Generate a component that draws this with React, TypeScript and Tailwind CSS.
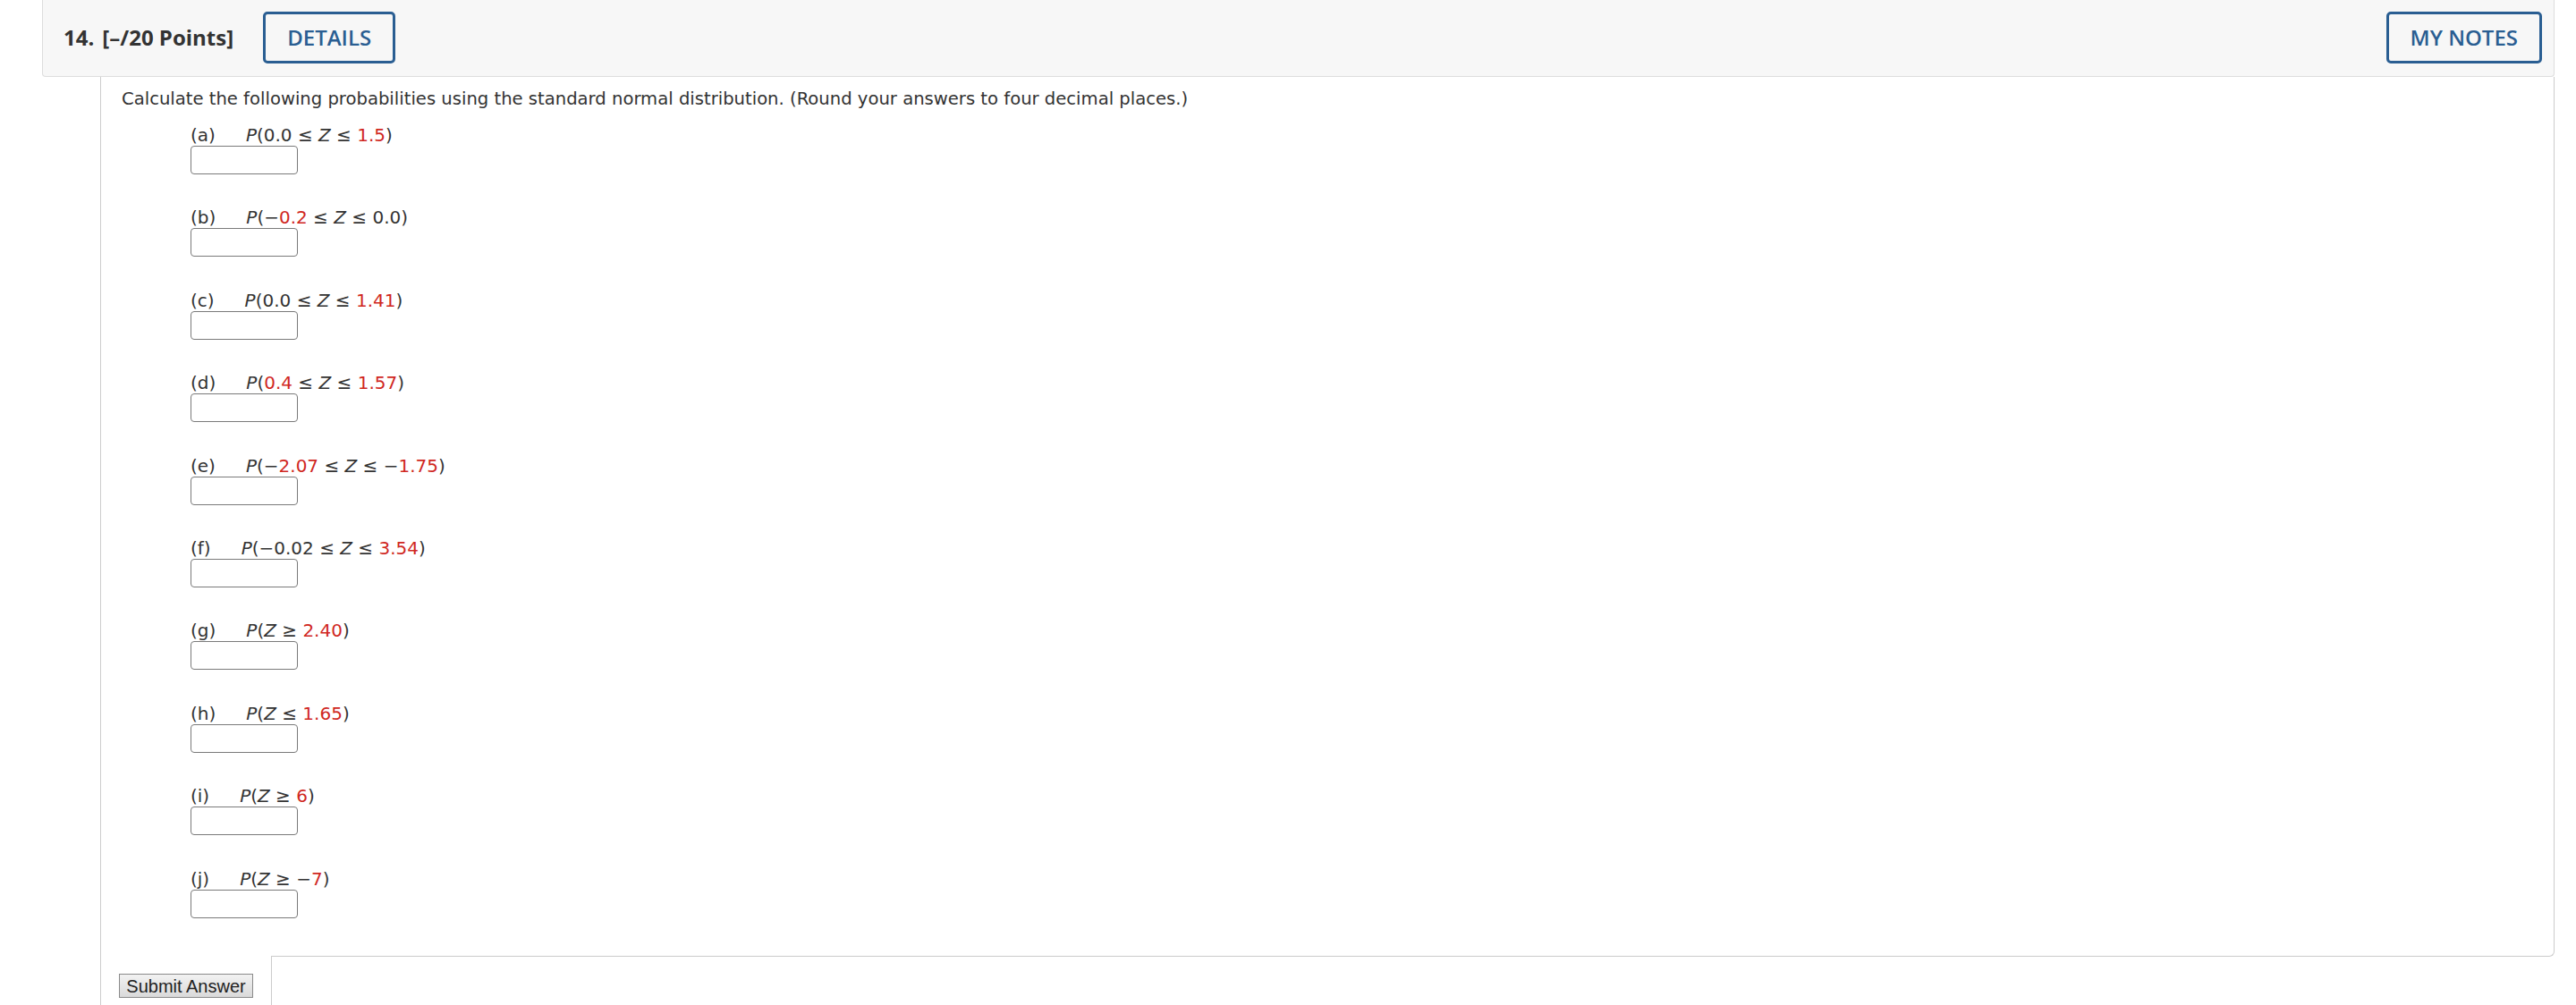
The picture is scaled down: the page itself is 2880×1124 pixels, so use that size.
type Seg = [string, 'n' | 'i' | 'r']

const parts: { label: string; expr: Seg[] }[] = [
  { label: '(a)', expr: [['P', 'i'], ['(0.0 ≤ ', 'n'], ['Z', 'i'], [' ≤ ', 'n'], ['1.5', 'r'], [')', 'n']] },
  { label: '(b)', expr: [['P', 'i'], ['(−', 'n'], ['0.2', 'r'], [' ≤ ', 'n'], ['Z', 'i'], [' ≤ 0.0)', 'n']] },
  { label: '(c)', expr: [['P', 'i'], ['(0.0 ≤ ', 'n'], ['Z', 'i'], [' ≤ ', 'n'], ['1.41', 'r'], [')', 'n']] },
  { label: '(d)', expr: [['P', 'i'], ['(', 'n'], ['0.4', 'r'], [' ≤ ', 'n'], ['Z', 'i'], [' ≤ ', 'n'], ['1.57', 'r'], [')', 'n']] },
  { label: '(e)', expr: [['P', 'i'], ['(−', 'n'], ['2.07', 'r'], [' ≤ ', 'n'], ['Z', 'i'], [' ≤ −', 'n'], ['1.75', 'r'], [')', 'n']] },
  { label: '(f)', expr: [['P', 'i'], ['(−0.02 ≤ ', 'n'], ['Z', 'i'], [' ≤ ', 'n'], ['3.54', 'r'], [')', 'n']] },
  { label: '(g)', expr: [['P', 'i'], ['(', 'n'], ['Z', 'i'], [' ≥ ', 'n'], ['2.40', 'r'], [')', 'n']] },
  { label: '(h)', expr: [['P', 'i'], ['(', 'n'], ['Z', 'i'], [' ≤ ', 'n'], ['1.65', 'r'], [')', 'n']] },
  { label: '(i)', expr: [['P', 'i'], ['(', 'n'], ['Z', 'i'], [' ≥ ', 'n'], ['6', 'r'], [')', 'n']] },
  { label: '(j)', expr: [['P', 'i'], ['(', 'n'], ['Z', 'i'], [' ≥ −', 'n'], ['7', 'r'], [')', 'n']] },
]

function Expr({ segs }: { segs: Seg[] }) {
  return (
    <span className="whitespace-pre">
      {segs.map(([t, k], i) =>
        k === 'i' ? <i key={i}>{t}</i> : k === 'r' ? <span key={i} className="text-[#d0281f]">{t}</span> : <span key={i}>{t}</span>
      )}
    </span>
  )
}

export default function App() {
  return (
    <div className="min-h-[1124px] bg-white pl-[47px]">
      <div className="w-[2809px]">
        {/* question header */}
        <div className="flex h-[86px] items-center justify-between rounded-b-[4px] border border-t-0 border-[#dddddd] bg-[#f7f7f7] pb-[2px] pl-[23px] pr-[13px] font-['Open_Sans',sans-serif]">
          <div className="flex items-center">
            <span className="text-[24px] font-bold text-[#333333]">14.</span>
            <span className="ml-[9px] text-[24px] font-bold text-[#333333]">[–/20 Points]</span>
            <button className="ml-[33px] h-[58px] rounded-[5px] border-[3px] border-[#2a5e92] px-[24px] text-[24px] font-semibold text-[#2a5e92]">
              DETAILS
            </button>
          </div>
          <button className="h-[58px] rounded-[5px] border-[3px] border-[#2a5e92] px-[24px] text-[24px] font-semibold text-[#2a5e92]">
            MY NOTES
          </button>
        </div>

        {/* body */}
        <div className="ml-[65px] border-l border-[#cccccc] font-['DejaVu_Sans',sans-serif] text-[20px] text-[#333333]">
          <div className="rounded-br-[6px] border-r border-b border-[#cccccc] pb-[42px] pl-[23px] pt-[12px]">
            <p className="text-[19.6px] leading-[26px]">
              Calculate the following probabilities using the standard normal distribution. (Round your answers to four decimal places.)
            </p>
            <div className="mt-[15px] pl-[77px]">
              {parts.map(p => (
                <div key={p.label} className="mb-[36.4px] last:mb-0">
                  <div className="flex leading-[24px]">
                    <span>{p.label}</span>
                    <span className="ml-[34px]"><Expr segs={p.expr} /></span>
                  </div>
                  <input type="text" className="block h-[32px] w-[120px] rounded-[4px] border border-[#7a7a7a] bg-white" />
                </div>
              ))}
            </div>
          </div>
          <div className="-mt-px flex">
            <div className="relative z-10 w-[190px] bg-white pl-[20px] pt-[19px]">
              <button className="h-[27px] w-[150px] border border-[#8a8a8a] bg-gradient-to-b from-[#f2f2f2] to-[#dadada] font-['Liberation_Sans',sans-serif] text-[20px] leading-none text-[#222222]">
                Submit Answer
              </button>
            </div>
            <div className="h-[60px] flex-1 border-l border-[#cccccc]" />
          </div>
        </div>
      </div>
    </div>
  )
}
